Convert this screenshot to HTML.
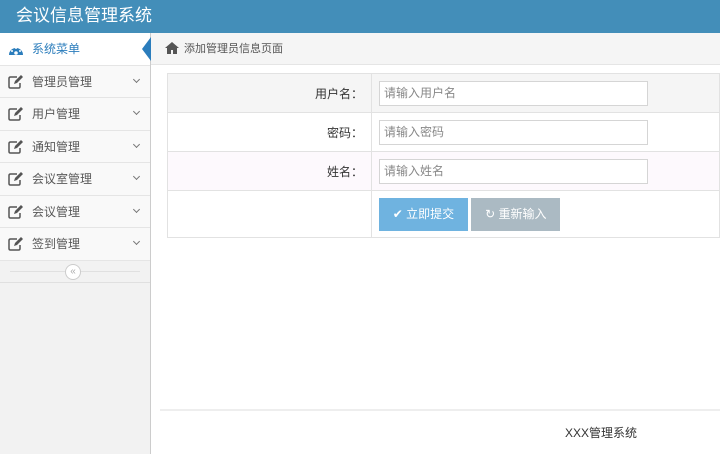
<!DOCTYPE html>
<html><head><meta charset="utf-8"><style>
*{margin:0;padding:0;box-sizing:border-box}
body{width:720px;height:454px;overflow:hidden;background:#fff;font-family:"Liberation Sans","Noto Sans CJK SC",sans-serif;font-size:12px;color:#393939;position:relative}
.hd{position:absolute;left:0;top:0;width:720px;height:33px;background:#438eb9;color:#fff;font-size:17px;line-height:31px;padding-left:16px}
.sb{position:absolute;left:0;top:33px;width:151px;height:421px;background:#f2f2f2;border-right:1px solid #ccc}
.it{height:32.5px;border-bottom:1px solid #e5e5e5;line-height:32px;padding-left:32px;position:relative;color:#585858;background:#f9f9f9}
.it.act{background:#fff;color:#2b7dbc}
.it svg.e{position:absolute;left:8px;top:9px}
.ar{position:absolute;right:11px;top:11px;width:5px;height:5px;border-right:1.2px solid #777;border-bottom:1.2px solid #777;transform:rotate(45deg)}
.tri{position:absolute;right:-1px;top:4px;width:0;height:0;border-top:12px solid transparent;border-bottom:12px solid transparent;border-right:9px solid #2b7dbc}
.col{height:22px;position:relative;border-bottom:1px solid #e0e0e0}
.col:before{content:"";position:absolute;left:10px;right:10px;top:10px;border-top:1px solid #e0e0e0}
.col span{position:absolute;left:65px;top:3px;width:16px;height:16px;border:1px solid #ccc;border-radius:50%;background:#fff;font-size:10px;line-height:13px;text-align:center;color:#aaa}
.bc{position:absolute;left:151px;top:33px;width:569px;height:32px;background:#f5f5f5;border-bottom:1px solid #e5e5e5;line-height:32px;padding-left:33px;font-size:11px;color:#555}
table{position:absolute;left:167px;top:73px;width:553px;border-collapse:collapse}
td{border:1px solid #e2e2e2;height:39px}
td.l{width:204px;text-align:right;padding-right:8px;font-size:12px;color:#333}
td.r{padding-left:7px}
.in{width:269px;height:25px;border:1px solid #d5d5d5;background:#fff;color:#888;font-size:12px;line-height:23px;padding-left:4px}
.btn{display:inline-block;width:89px;height:33px;color:#fff;line-height:33px;text-align:center;font-size:12px;vertical-align:top}
.ft{position:absolute;left:160px;top:409px;width:560px;border-top:2px solid #eee}
</style></head><body>
<div class="hd">会议信息管理系统</div>
<div class="sb">
<div class="it act"><svg style="position:absolute;left:8px;top:10px" width="16" height="13" viewBox="0 0 16 13"><path d="M1 12A7 7 0 0 1 15 12Z" fill="#2b7dbc"/><circle cx="8" cy="10" r="1.8" fill="#fff"/><circle cx="4" cy="8" r="1" fill="#fff"/><circle cx="8" cy="5" r="1" fill="#fff"/><circle cx="12" cy="8" r="1" fill="#fff"/></svg>系统菜单<div class="tri"></div></div>
<div class="it"><svg class="e" width="15" height="14" viewBox="0 0 15 14"><path d="M9 2H2.5Q1 2 1 3.5v8Q1 13 2.5 13h8q1.5 0 1.5-1.5V8" fill="none" stroke="#555" stroke-width="1.5"/><path d="M6 9l1-3 6-6 2 2-6 6z" fill="#555"/></svg>管理员管理<div class="ar"></div></div>
<div class="it"><svg class="e" width="15" height="14" viewBox="0 0 15 14"><path d="M9 2H2.5Q1 2 1 3.5v8Q1 13 2.5 13h8q1.5 0 1.5-1.5V8" fill="none" stroke="#555" stroke-width="1.5"/><path d="M6 9l1-3 6-6 2 2-6 6z" fill="#555"/></svg>用户管理<div class="ar"></div></div>
<div class="it"><svg class="e" width="15" height="14" viewBox="0 0 15 14"><path d="M9 2H2.5Q1 2 1 3.5v8Q1 13 2.5 13h8q1.5 0 1.5-1.5V8" fill="none" stroke="#555" stroke-width="1.5"/><path d="M6 9l1-3 6-6 2 2-6 6z" fill="#555"/></svg>通知管理<div class="ar"></div></div>
<div class="it"><svg class="e" width="15" height="14" viewBox="0 0 15 14"><path d="M9 2H2.5Q1 2 1 3.5v8Q1 13 2.5 13h8q1.5 0 1.5-1.5V8" fill="none" stroke="#555" stroke-width="1.5"/><path d="M6 9l1-3 6-6 2 2-6 6z" fill="#555"/></svg>会议室管理<div class="ar"></div></div>
<div class="it"><svg class="e" width="15" height="14" viewBox="0 0 15 14"><path d="M9 2H2.5Q1 2 1 3.5v8Q1 13 2.5 13h8q1.5 0 1.5-1.5V8" fill="none" stroke="#555" stroke-width="1.5"/><path d="M6 9l1-3 6-6 2 2-6 6z" fill="#555"/></svg>会议管理<div class="ar"></div></div>
<div class="it"><svg class="e" width="15" height="14" viewBox="0 0 15 14"><path d="M9 2H2.5Q1 2 1 3.5v8Q1 13 2.5 13h8q1.5 0 1.5-1.5V8" fill="none" stroke="#555" stroke-width="1.5"/><path d="M6 9l1-3 6-6 2 2-6 6z" fill="#555"/></svg>签到管理<div class="ar"></div></div>
<div class="col"><span>«</span></div>
</div>
<div class="bc"><svg style="position:absolute;left:14px;top:9px" width="14" height="12" viewBox="0 0 14 12"><path d="M7 0L0 6h2v6h4V8h2v4h4V6h2z" fill="#555"/></svg>添加管理员信息页面</div>
<table>
<tr style="background:#f5f5f5"><td class="l">用户名：</td><td class="r"><div class="in">请输入用户名</div></td></tr>
<tr><td class="l">密码：</td><td class="r"><div class="in">请输入密码</div></td></tr>
<tr style="background:#fdf9fd"><td class="l">姓名：</td><td class="r"><div class="in">请输入姓名</div></td></tr>
<tr><td class="l" style="height:47px"></td><td class="r"><span class="btn" style="background:#6fb3e0">✔ 立即提交</span> <span class="btn" style="background:#abbac3">↻ 重新输入</span></td></tr>
</table>
<div class="ft"></div>
<div style="position:absolute;left:565px;top:424px;font-size:12px;color:#333">XXX管理系统</div>
</body></html>
